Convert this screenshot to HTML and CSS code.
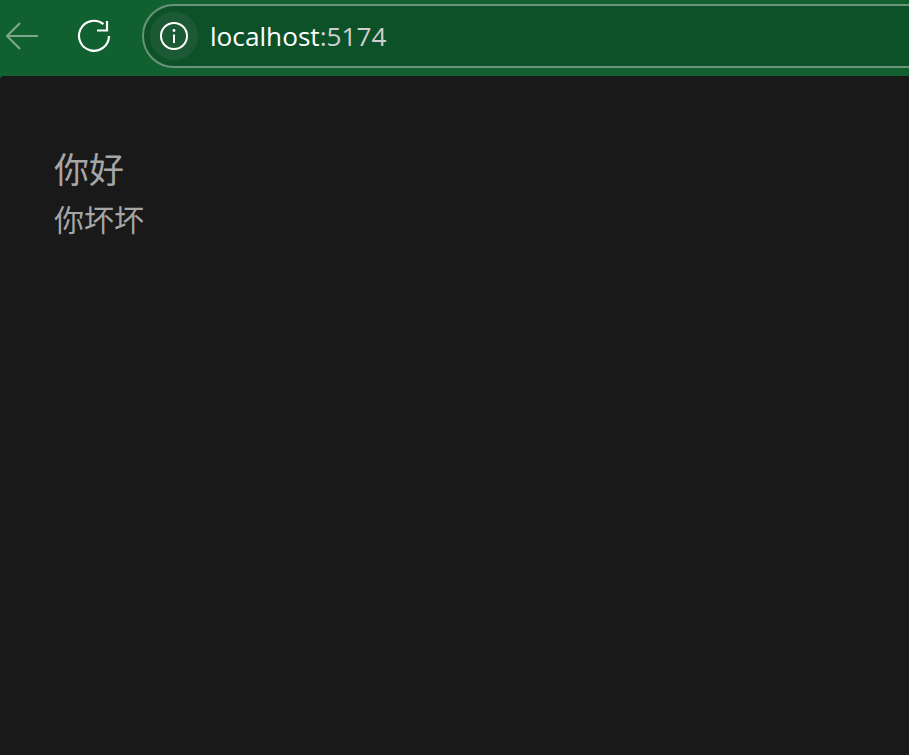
FILE: index.html
```html
<!DOCTYPE html>
<html lang="zh">
<head>
<meta charset="utf-8">
<title>localhost:5174</title>
<link rel="stylesheet" href="styles.css">
</head>
<body>
<header class="toolbar">
  <button class="nav-btn back" aria-label="Back">
    <svg viewBox="0 0 34 30" width="34" height="30"><path d="M33 15H2M15 2 2 15l13 13" fill="none" stroke="currentColor" stroke-width="2"/></svg>
  </button>
  <button class="nav-btn reload" aria-label="Reload">
    <svg viewBox="0 0 34 34" width="34" height="34"><path d="M26.500 5.200A15 15 0 1 0 32 17" fill="none" stroke="currentColor" stroke-width="2.200"/><path d="M30 2v9.500H20" fill="none" stroke="currentColor" stroke-width="2.200"/></svg>
  </button>
  <div class="omnibox">
    <span class="site-info">
      <svg viewBox="0 0 28 28" width="28" height="28"><circle cx="14" cy="14" r="13" fill="none" stroke="#fff" stroke-width="2"/><path d="M14 12.500V21" stroke="#fff" stroke-width="2"/><circle cx="14" cy="8.500" r="1.400" fill="#fff"/></svg>
    </span>
    <span class="url"><span class="host">localhost</span><span class="port">:5174</span></span>
  </div>
</header>
<main class="page">
  <h1 class="line-one">你好</h1>
  <p class="line-two">你坏坏</p>
</main>
</body>
</html>
```

FILE: styles.css
```css
* { box-sizing: border-box; }
html, body { margin: 0; height: 100%; }
body {
  display: flex;
  flex-direction: column;
  background: #116130;
  overflow: hidden;
  font-family: "Open Sans", "Noto Sans", sans-serif;
}
.toolbar {
  height: 76px;
  flex: none;
  display: flex;
  align-items: flex-start;
  padding: 4px 0 0 5px;
}
.nav-btn {
  border: 0;
  padding: 0;
  background: none;
  display: flex;
  align-items: center;
  justify-content: center;
  height: 64px;
}
.back { color: #7fa98e; width: 34px; margin-right: 38px; }
.reload { color: #fff; width: 34px; margin-right: 31px; }
.omnibox {
  flex: 1;
  height: 64px;
  margin-right: -40px;
  border: 2px solid #6a9379;
  border-radius: 32px;
  background: #0d5128;
  display: flex;
  align-items: center;
  padding-left: 6px;
}
.site-info {
  width: 48px;
  height: 48px;
  border-radius: 50%;
  background: #1c5a35;
  display: flex;
  align-items: center;
  justify-content: center;
  margin-right: 12px;
}
.url { font-size: 26.200px; white-space: nowrap; }
.host { color: #fff; }
.port { color: #cfcfcf; }
.page {
  flex: 1;
  background: #191919;
  border-top-left-radius: 4px;
  padding: 69px 54px 0;
  font-family: "Noto Sans CJK SC", sans-serif;
  color: #a6a6a6;
}
.line-one { margin: 0; font-size: 35px; font-weight: 400; line-height: 46px; }
.line-two { margin: 7px 0 0; font-size: 30px; line-height: 40px; font-weight: 400; }
```
